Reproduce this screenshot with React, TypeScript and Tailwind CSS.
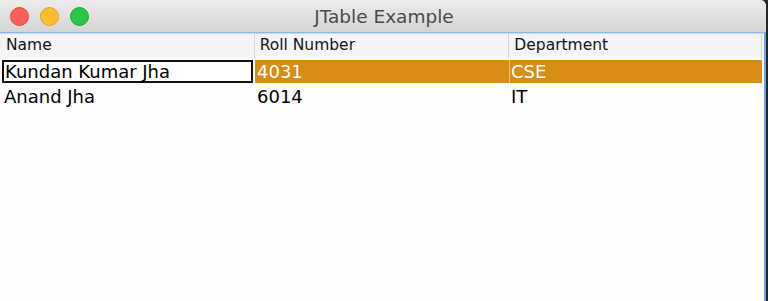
export default function App() {
  const rows = [
    { name: "Kundan Kumar Jha", roll: "4031", dept: "CSE", selected: true },
    { name: "Anand Jha", roll: "6014", dept: "IT", selected: false },
  ];
  return (
    <div className="w-[768px] h-[301px] bg-[#262626] overflow-hidden" style={{ fontFamily: '"DejaVu Sans", "Noto Sans", sans-serif' }}>
      <div className="w-[766px] h-[301px] flex flex-col bg-[#fdfdfd] rounded-tr-[6px] overflow-hidden">
        <div className="h-[32px] shrink-0 flex items-center relative bg-gradient-to-b from-[#ececec] to-[#d5d5d5]">
          <div className="flex items-center gap-[11px] pl-[10px] pt-[1px]">
            <div className="w-[19px] h-[19px] rounded-full bg-[#fe5f57] border border-[#e4473f]" />
            <div className="w-[19px] h-[19px] rounded-full bg-[#febc2e] border border-[#e0a324]" />
            <div className="w-[19px] h-[19px] rounded-full bg-[#28c840] border border-[#1eac2e]" />
          </div>
          <div className="absolute inset-0 flex items-center justify-center pl-[2px] pt-[1px] text-[18.5px] text-[#4b4b4b]">JTable Example</div>
        </div>
        <div className="flex-1 flex flex-col border-t border-[#8ab7e6] border-r-2 border-r-[#6fa7e2]">
          <div className="flex h-[25px] shrink-0 bg-[#f5f5f5] border-t border-[#c9dcef] text-[15.5px] text-[#141414] pr-[2px]">
            <div className="w-[255px] flex items-center pl-[6px] border-r border-[#d6d6d6]">Name</div>
            <div className="w-[255px] flex items-center pl-[5px] border-r border-[#d6d6d6]">Roll Number</div>
            <div className="w-[253px] flex items-center pl-[5px] border-r border-[#d6d6d6]">Department</div>
          </div>
          <div className="pt-[2px] text-[18px]">
            {rows.map((r) =>
              r.selected ? (
                <div key={r.name} className="flex h-[24px]">
                  <div className="w-[255px] pl-[2px] flex">
                    <div className="w-[251px] h-[23px] border-2 border-[#111] bg-white flex items-center pl-[1px] text-black">{r.name}</div>
                  </div>
                  <div className="w-[255px] h-[23px] bg-[#d68c15] text-white flex items-center pl-[2px] border-r border-[#f2c47a]">{r.roll}</div>
                  <div className="w-[252px] h-[23px] bg-[#d68c15] text-white flex items-center pl-[1px]">{r.dept}</div>
                </div>
              ) : (
                <div key={r.name} className="flex h-[24px] text-black">
                  <div className="w-[255px] flex items-center pl-[4px]">{r.name}</div>
                  <div className="w-[255px] flex items-center pl-[2px]">{r.roll}</div>
                  <div className="w-[252px] flex items-center pl-[1px]">{r.dept}</div>
                </div>
              )
            )}
          </div>
        </div>
      </div>
    </div>
  );
}
